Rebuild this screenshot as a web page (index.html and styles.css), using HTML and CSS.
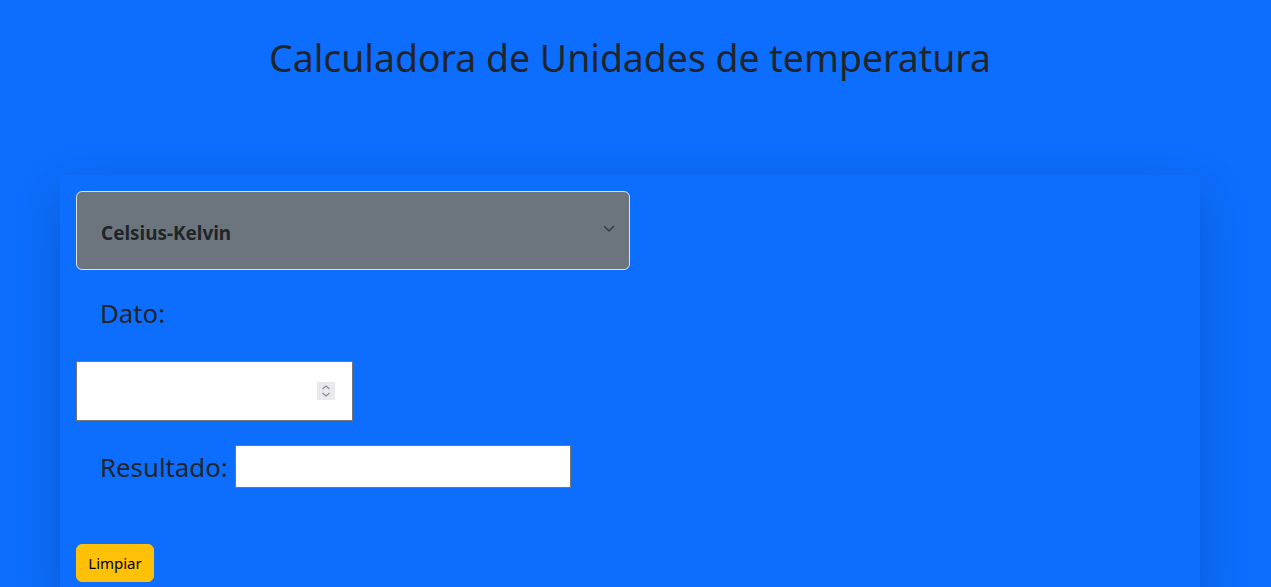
FILE: index.html
```html
<!DOCTYPE html>
<html lang="es">
<head>
<meta charset="utf-8">
<title>Calculadora de Unidades de temperatura</title>
<link rel="stylesheet" href="styles.css">
</head>
<body>
<div class="page">
  <h1 class="title">Calculadora de Unidades de temperatura</h1>
  <div class="card">
    <div class="select">
      <span class="select-text">Celsius-Kelvin</span>
      <svg class="chevron" width="12" height="8" viewBox="0 0 12 8"><path d="M1.5 1.5 L6 6 L10.5 1.5" fill="none" stroke="#343a40" stroke-width="1.4" stroke-linecap="round" stroke-linejoin="round"/></svg>
    </div>
    <label class="label dato">Dato:</label>
    <div class="num-wrap">
      <input class="num" type="text" aria-label="Dato">
      <span class="spinner">
        <svg width="18" height="18" viewBox="0 0 18 18"><path d="M5.5 7 L9 4 L12.5 7" fill="none" stroke="#8a8a90" stroke-width="1.2"/><path d="M5.5 11 L9 14 L12.5 11" fill="none" stroke="#8a8a90" stroke-width="1.2"/></svg>
      </span>
    </div>
    <div class="result-row">
      <label class="label">Resultado:</label>
      <input class="result" type="text" aria-label="Resultado">
    </div>
    <button class="btn">Limpiar</button>
  </div>
</div>
</body>
</html>
```

FILE: styles.css
```css
html, body {
  margin: 0;
  padding: 0;
  height: 100%;
  overflow: hidden;
}
body {
  background: #0d6efd;
  color: #212529;
  font-family: "Noto Sans", "Open Sans", sans-serif;
}
.page {
  width: 1260px;
}
.title {
  margin: 34px 0 0;
  font-size: 37.4px;
  font-weight: 400;
  line-height: 48px;
  text-align: center;
  color: #212529;
}
.card {
  width: 1140px;
  margin: 93px auto 0;
  padding: 16px;
  box-sizing: border-box;
  height: 430px;
  box-shadow: 0 1rem 3rem rgba(0, 0, 0, .175);
  display: flex;
  flex-direction: column;
  align-items: flex-start;
}
.select {
  width: 554px;
  height: 79px;
  box-sizing: border-box;
  background: #6c757d;
  border: 1px solid #dee2e6;
  border-radius: 6px;
  display: flex;
  align-items: center;
  justify-content: space-between;
  padding: 4px 14px 0 24px;
}
.select-text {
  font-size: 18.9px;
  font-weight: 700;
  color: #212529;
}
.chevron {
  margin-bottom: 8px;
}
.label {
  font-size: 25.8px;
  line-height: 36px;
  color: #212529;
}
.dato {
  margin: 25px 0 0 24px;
}
.num-wrap {
  position: relative;
  margin-top: 30px;
}
.num {
  display: block;
  width: 277px;
  height: 60px;
  box-sizing: border-box;
  border: 1px solid #767676;
  border-radius: 0;
  background: #fff;
  margin: 0;
  padding: 0 8px;
}
.spinner {
  position: absolute;
  left: 241px;
  top: 21px;
  width: 18px;
  height: 18px;
  background: #e9e9ed;
  display: flex;
}
.result-row {
  display: flex;
  align-items: center;
  gap: 7px;
  margin-top: 24px;
  padding-left: 24px;
}
.result {
  width: 336px;
  height: 43px;
  box-sizing: border-box;
  border: 1px solid #767676;
  background: #fff;
  margin: 0;
}
.btn {
  margin-top: 56px;
  width: 78px;
  height: 38px;
  background: #ffc107;
  border: 1px solid #ffc107;
  border-radius: 6px;
  color: #000;
  font-family: "Noto Sans", "Open Sans", sans-serif;
  font-size: 15px;
  padding: 0;
}
```
